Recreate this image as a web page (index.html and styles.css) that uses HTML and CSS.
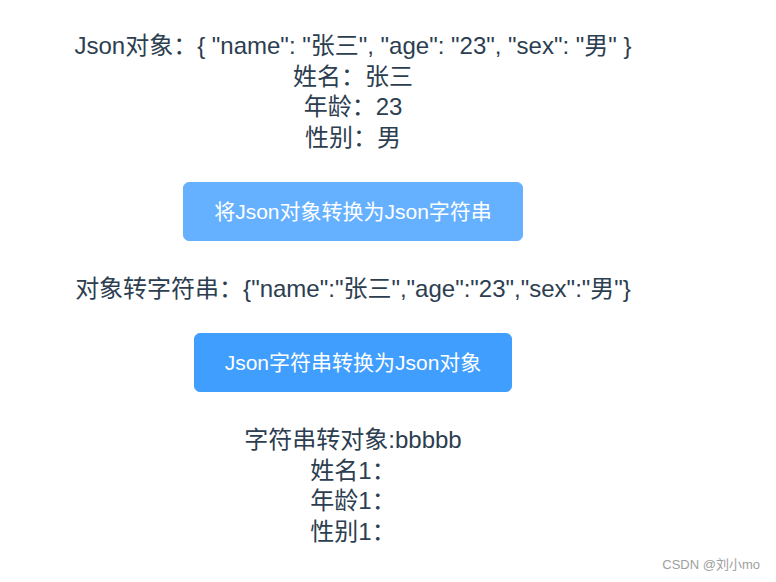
FILE: index.html
```html
<!DOCTYPE html>
<html lang="zh-CN">
<head>
<meta charset="utf-8">
<title>Json</title>
<link rel="stylesheet" href="styles.css">
</head>
<body>
<div class="app">
  <div class="block block-first">
    <div class="line">Json对象：{ "name": "张三", "age": "23", "sex": "男" }</div>
    <div class="line">姓名：张三</div>
    <div class="line">年龄：23</div>
    <div class="line">性别：男</div>
  </div>
  <button class="btn btn-light">将Json对象转换为Json字符串</button>
  <div class="block block-mid">
    <div class="line">对象转字符串：{"name":"张三","age":"23","sex":"男"}</div>
  </div>
  <button class="btn btn-primary btn-second">Json字符串转换为Json对象</button>
  <div class="block block-last">
    <div class="line">字符串转对象:bbbbb</div>
    <div class="line">姓名1：</div>
    <div class="line">年龄1：</div>
    <div class="line">性别1：</div>
  </div>
</div>
<div class="watermark">CSDN @刘小mo</div>
</body>
</html>
```

FILE: styles.css
```css
html, body {
  margin: 0;
  padding: 0;
  background: #ffffff;
}
body {
  width: 776px;
  height: 582px;
  position: relative;
  overflow: hidden;
  font-family: "Liberation Sans", "Noto Sans CJK SC", sans-serif;
  color: #2c3e50;
}
.app {
  width: 706px;
  padding-top: 31px;
  display: flex;
  flex-direction: column;
  align-items: center;
  text-align: center;
}
.block {
  font-size: 24px;
  line-height: 30.5px;
}
.line {
  white-space: nowrap;
}
.btn {
  margin-top: 29px;
  box-sizing: border-box;
  height: 59px;
  padding: 0 30px;
  border-radius: 6px;
  color: #ffffff;
  font-family: "Liberation Sans", "Noto Sans CJK SC", sans-serif;
  font-size: 21px;
  line-height: 21px;
  cursor: pointer;
}
.btn-light {
  background: #66b1ff;
  border: 1px solid #66b1ff;
}
.btn-primary {
  background: #409eff;
  border: 1px solid #409eff;
}
.block-mid {
  margin-top: 33px;
}
.btn-second {
  margin-top: 28.5px;
}
.block-last {
  margin-top: 33px;
}
.watermark {
  position: absolute;
  right: 16px;
  bottom: 9px;
  font-size: 13px;
  color: #a0a0a0;
  font-family: "Liberation Sans", "Noto Sans CJK SC", sans-serif;
}
```
